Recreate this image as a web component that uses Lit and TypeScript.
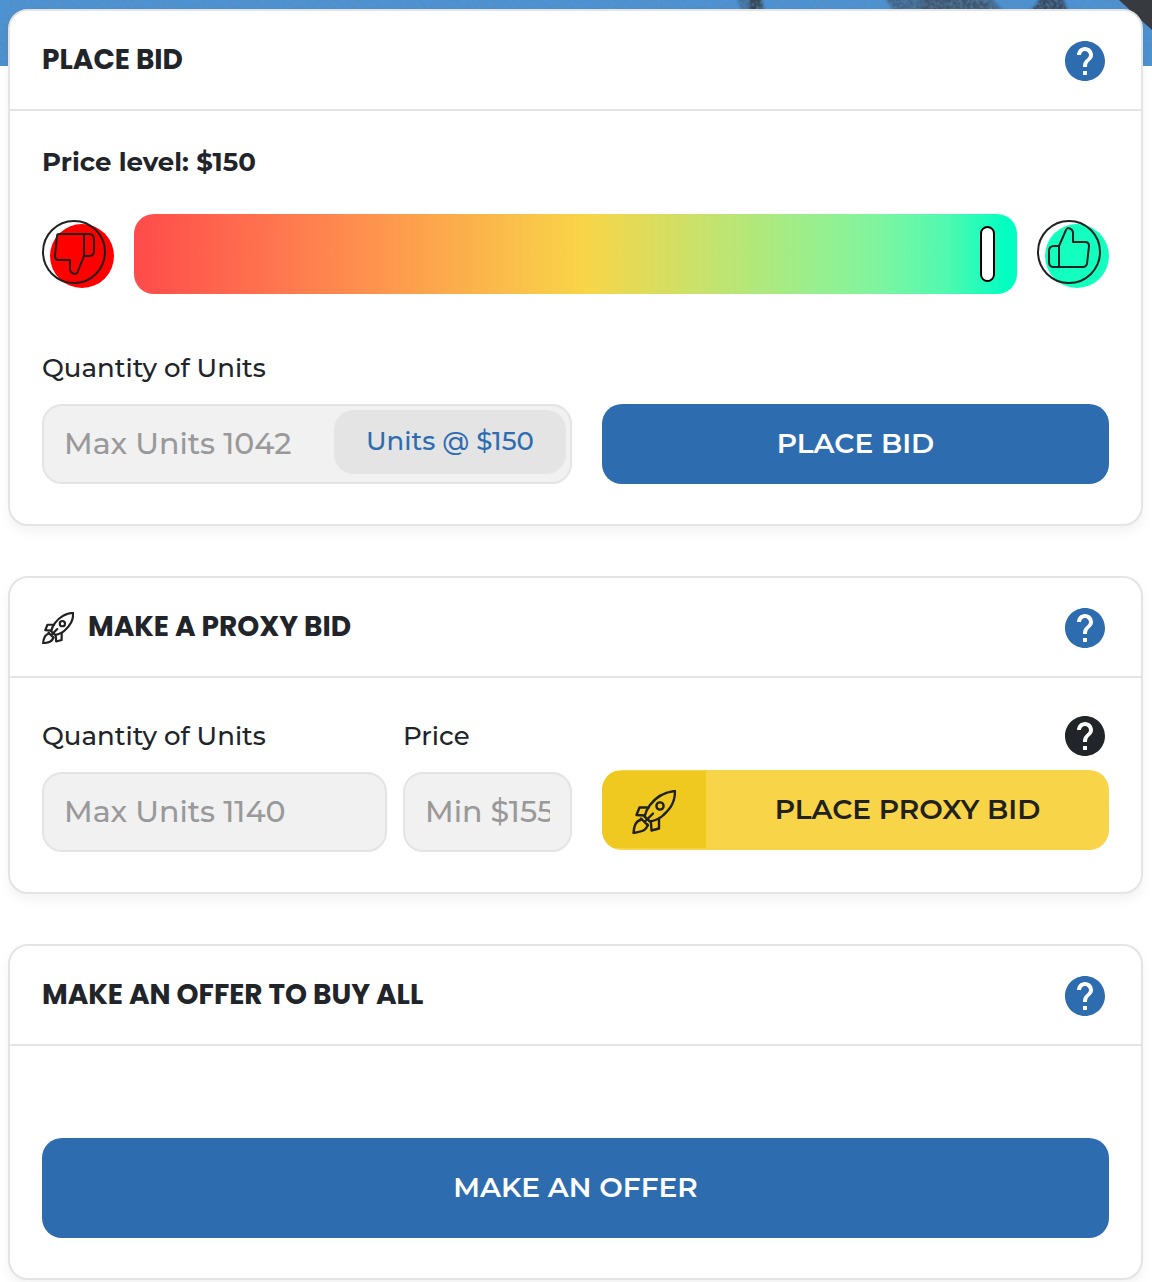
import { LitElement, html, css, svg, nothing } from "lit";
import { customElement, property, state } from "lit/decorators.js";

const rocketShapes = svg`
  <path d="M43 1C32 2 24 7 18 15c-3 4-4.500 7-5.500 11.500L18 31.500C23 30.500 28 28.500 31.500 25C39 18 43 12 43 1Z"/>
  <circle cx="28" cy="16" r="3.600"/>
  <path d="M16.500 17.500H7.500L4.500 25l8 .500"/>
  <path d="M27 29V38.500L19.500 40.500L19 33"/>
  <path d="M9.500 29.500C3 31 2 37 1.500 43C8 42 15 41 15.500 34.500"/>
  <path d="M9 28.500L16 35.500M12.500 32L21 23.500"/>`;

@customElement("help-button")
export class HelpButton extends LitElement {
  static styles = css`
    :host { display: block; flex: none; }
    .help {
      display: block; padding: 0; border: 0; background: none;
      color: #2e6cb0; cursor: pointer;
    }
    .dark { color: #212429; }
    .glyph { display: block; width: 48px; height: 48px; }
  `;
  @property() label = "Help";
  @property({ type: Boolean }) dark = false;

  render() {
    return html`
      <button class=${this.dark ? "help dark" : "help"} type="button" aria-label=${this.label}>
        <svg class="glyph" viewBox="0 0 24 24" fill="currentColor" aria-hidden="true">
          <path d="M12 2C6.480 2 2 6.480 2 12s4.480 10 10 10 10-4.480 10-10S17.520 2 12 2zm1 17h-2v-2h2v2zm2.070-7.750-.900.920C13.450 12.900 13 13.500 13 15h-2v-.500c0-1.100.450-2.100 1.170-2.830l1.240-1.260c.370-.360.590-.860.590-1.410 0-1.100-.900-2-2-2s-2 .900-2 2H8c0-2.210 1.790-4 4-4s4 1.790 4 4c0 .880-.360 1.680-.930 2.250z"/>
        </svg>
      </button>`;
  }
}

@customElement("bid-card")
export class BidCard extends LitElement {
  static styles = css`
    :host {
      display: block; background: #fff; border: 2px solid #e4e4e4;
      border-radius: 20px; box-shadow: 0 6px 12px rgba(0, 0, 0, 0.05);
    }
    .head {
      display: flex; align-items: center; gap: 14px;
      padding: 26px 32px 24px; border-bottom: 2px solid #e4e4e4;
    }
    .title {
      flex: 1; margin: 0; padding-bottom: 2px;
      font: 700 28px/32px Poppins, Inter, sans-serif; color: #212429;
    }
    .rocket {
      width: 32px; height: 32px; fill: none; stroke: #212121;
      stroke-width: 3; stroke-linejoin: round; stroke-linecap: round;
    }
    .body { padding: 0 32px 40px; }
  `;
  @property() heading = "";
  @property({ type: Boolean }) rocket = false;

  render() {
    return html`
      <header class="head">
        ${this.rocket
          ? html`<svg class="rocket" viewBox="0 0 44 44" aria-hidden="true">${rocketShapes}</svg>`
          : nothing}
        <h2 class="title">${this.heading}</h2>
        <help-button></help-button>
      </header>
      <div class="body"><slot></slot></div>`;
  }
}

@customElement("app-root")
export class AppRoot extends LitElement {
  static styles = css`
    :host {
      display: block; position: relative; background: #fff; color: #212429;
      font-family: Montserrat, Inter, sans-serif; font-weight: 500;
    }
    * { box-sizing: border-box; }
    .banner { position: absolute; top: 0; left: 0; width: 100%; height: 66px; display: block; }
    .page {
      position: relative; display: flex; flex-direction: column; gap: 50px;
      padding: 9px 9px 2px 8px;
    }
    .price { margin: 0; padding-top: 27px; font-size: 26px; line-height: 48px; font-weight: 700; }
    .level { display: flex; align-items: center; gap: 20px; padding: 28px 0 50px; }
    .thumb-icon { flex: none; width: 72px; height: 72px; fill: none; stroke: #212121; stroke-width: 2; stroke-linejoin: round; }
    .red { fill: #f00; stroke: none; }
    .green { fill: #13ffc0; stroke: none; }
    .slider {
      appearance: none; flex: 1; min-width: 0; height: 80px; margin: 0; border-radius: 20px;
      background: linear-gradient(90deg, #ff4b4b 0%, #ff8050 20%, #f8d548 51%, #80f5a0 84%, #50f9b0 92%, #00ffc2 99%);
    }
    .slider::-webkit-slider-thumb {
      appearance: none; width: 15px; height: 56px; background: #fff;
      border: 2px solid #000; border-radius: 8px;
    }
    .form { display: grid; grid-template-columns: 530fr 507fr; gap: 30px; align-items: end; }
    .proxy-form { align-items: start; padding-top: 34px; }
    .pair { display: grid; grid-template-columns: 345fr 169fr; gap: 16px; }
    .label { display: block; margin-bottom: 12px; font-size: 26px; line-height: 48px; }
    .field {
      display: flex; height: 80px; background: #f1f1f1;
      border: 2px solid #e4e4e4; border-radius: 20px;
    }
    .input {
      flex: 1; min-width: 0; width: 100%; margin: 0 20px; padding: 0; border: 0; outline: 0;
      background: none; color: #212429; font: 500 30px/36px Montserrat, Inter, sans-serif;
    }
    .input::placeholder { color: #999; opacity: 1; }
    .suffix {
      flex: none; width: 232px; margin: 4px 4px 8px 0; border-radius: 20px; background: #e4e4e4;
      color: #2e6cb0; text-align: center; font-size: 26px; line-height: 62px;
    }
    .btn {
      display: block; width: 100%; height: 80px; padding: 0 0 2px; border: 0; border-radius: 20px;
      background: #2e6cb0; color: #fff; cursor: pointer;
      font: 600 28px/34px Montserrat, Inter, sans-serif;
    }
    .tall { height: 100px; margin-top: 92px; }
    .action { display: flex; flex-direction: column; gap: 10px; }
    .dark-help { align-self: flex-end; }
    .proxy {
      display: flex; align-items: stretch; overflow: hidden; padding: 1px 0 2px;
      background: #f8d448; color: #212121;
    }
    .badge { flex: none; display: flex; align-items: center; justify-content: center; width: 104px; padding-top: 4px; background: #efc820; }
    .badge-icon { width: 44px; height: 44px; fill: none; stroke: #212121; stroke-width: 2.4; stroke-linejoin: round; stroke-linecap: round; }
    .caption { flex: 1; align-self: center; padding-bottom: 2px; }
  `;
  @state() private price = 150;

  private onSlide(e: Event) {
    this.price = Number((e.target as HTMLInputElement).value);
  }

  render() {
    return html`
      <svg class="banner" viewBox="0 0 1152 66" preserveAspectRatio="xMaxYMin slice" aria-hidden="true">
        <defs>
          <filter id="grain" x="0" y="0" width="100%" height="100%">
            <feTurbulence type="fractalNoise" baseFrequency="0.3" numOctaves="3" seed="4"/>
            <feColorMatrix type="matrix" values="0 0 0 0 0.100  0 0 0 0 0.250  0 0 0 0 0.450  1.500 0 0 0 -0.550"/>
          </filter>
          <filter id="soft"><feGaussianBlur stdDeviation="1.500"/></filter>
        </defs>
        <rect width="1152" height="66" fill="#4c93d6"/>
        <g filter="url(#soft)">
          <path d="M736-4h14l2 16h-10Z" fill="#41709f"/>
          <path d="M749-4h12l3 16h-14Z" fill="#354656"/>
          <path d="M884-4h106l14 16H894Z" fill="#40658a"/>
          <path d="M925-4h55l14 16h-74Z" fill="#3f5670"/>
          <path d="M1042-4h20l6 16h-38Z" fill="#384c63"/>
        </g>
        <rect width="1152" height="66" filter="url(#grain)"/>
        <path d="M1119 0h33v30Z" fill="#373a3f"/>
      </svg>
      <main class="page">
        <bid-card heading="PLACE BID">
          <p class="price">Price level: $${this.price}</p>
          <div class="level">
            <svg class="thumb-icon" viewBox="0 0 72 72" aria-hidden="true">
              <circle class="red" cx="40" cy="38" r="32"/>
              <circle cx="32" cy="34" r="31"/>
              <path d="M17 16H47q5 0 5 5V33q0 5-5 5H42L36 53q-1 3-3 3-5-1-5-5V42H17q-4 0-4-4L15 18q0-2 2-2ZM42 16V38"/>
            </svg>
            <input class="slider" type="range" min="72" max="152" aria-label="Price level"
              .value=${String(this.price)} @input=${this.onSlide} />
            <svg class="thumb-icon" viewBox="0 0 72 72" aria-hidden="true">
              <circle class="green" cx="40" cy="38" r="32"/>
              <circle cx="32" cy="34" r="31"/>
              <path d="M22 28H17q-5 0-5 5V44q0 5 5 5H46q3 0 4-3l2-18q0-4-4-4H36V15q0-4-5-5-1 0-2 2ZM22 28V49"/>
            </svg>
          </div>
          <div class="form">
            <div>
              <label class="label" for="qty">Quantity of Units</label>
              <div class="field">
                <input class="input" id="qty" type="text" placeholder="Max Units 1042" />
                <span class="suffix">Units @ $${this.price}</span>
              </div>
            </div>
            <button class="btn" type="button">PLACE BID</button>
          </div>
        </bid-card>
        <bid-card heading="MAKE A PROXY BID" rocket>
          <div class="form proxy-form">
            <div class="pair">
              <div>
                <label class="label" for="proxy-qty">Quantity of Units</label>
                <div class="field">
                  <input class="input" id="proxy-qty" type="text" placeholder="Max Units 1140" />
                </div>
              </div>
              <div>
                <label class="label" for="proxy-price">Price</label>
                <div class="field">
                  <input class="input" id="proxy-price" type="text" placeholder="Min $155" />
                </div>
              </div>
            </div>
            <div class="action">
              <help-button class="dark-help" dark></help-button>
              <button class="btn proxy" type="button">
                <span class="badge">
                  <svg class="badge-icon" viewBox="0 0 44 44" aria-hidden="true">${rocketShapes}</svg>
                </span>
                <span class="caption">PLACE PROXY BID</span>
              </button>
            </div>
          </div>
        </bid-card>
        <bid-card heading="MAKE AN OFFER TO BUY ALL">
          <button class="btn tall" type="button">MAKE AN OFFER</button>
        </bid-card>
      </main>`;
  }
}
